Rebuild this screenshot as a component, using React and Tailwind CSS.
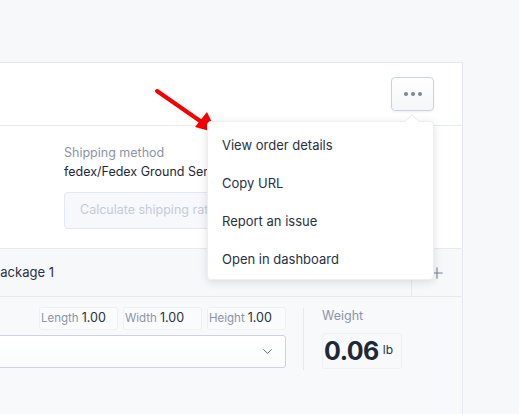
import React from "react";
import { ChevronDown, Plus } from "lucide-react";

const MENU = ["View order details", "Copy URL", "Report an issue", "Open in dashboard"];

function DimBox({ label, value }) {
  return (
    <div className="flex h-[23px] w-[79px] items-center gap-[3px] rounded-[3px] border border-[#eef0f4] bg-[#fafbfc] pl-[1px]">
      <span className="text-[11.5px] text-[#8b94a7]">{label}</span>
      <span className="text-[12.5px] text-[#273142]">{value}</span>
    </div>
  );
}

function MoreMenu() {
  return (
    <div className="relative">
      <button className="flex h-[34px] w-[43px] items-center justify-center gap-[3px] rounded-[4px] border border-[#cbd3e3] bg-gradient-to-b from-white to-[#f5f6f9] shadow-[0_1px_2px_rgba(30,40,70,0.08)]">
        <span className="h-[4px] w-[4px] rounded-full bg-[#7c8598]" />
        <span className="h-[4px] w-[4px] rounded-full bg-[#7c8598]" />
        <span className="h-[4px] w-[4px] rounded-full bg-[#7c8598]" />
      </button>
      <div className="absolute right-0 top-[44px] z-10 w-[227px] rounded-[4px] border border-[#eceef2] bg-white pt-[5px] shadow-[0_2px_8px_rgba(30,40,70,0.14)]">
        <div className="absolute right-[16px] top-[-6px] h-[10px] w-[10px] rotate-45 border-l border-t border-[#eceef2] bg-white" />
        {MENU.map((item) => (
          <div key={item} className="flex h-[38px] items-center pl-[14px] text-[13px] text-[#273142]">
            {item}
          </div>
        ))}
      </div>
    </div>
  );
}

export default function App() {
  return (
    <div className="relative h-[414px] w-[519px] overflow-hidden bg-[#f7f8fa] pt-[62px] font-['Inter',sans-serif]">
      <div className="ml-[-100px] w-[563px] border border-[#e6e9ef] bg-white">
        {/* header with actions */}
        <div className="flex h-[63px] justify-end border-b border-[#e6e9ef] pr-[28px] pt-[14px]">
          <MoreMenu />
        </div>

        {/* shipping method */}
        <div className="h-[123px] border-b border-[#e6e9ef] pl-[163px] pt-[18px]">
          <div className="text-[12.5px] leading-[18px] text-[#8b94a7]">Shipping method</div>
          <div className="mt-[1px] whitespace-nowrap text-[12.5px] leading-[18px] text-[#1f2837]">
            fedex/Fedex Ground Service
          </div>
          <div className="mt-[11px] flex h-[37px] w-[180px] items-center rounded-[4px] border border-[#e3e7ef] bg-[#f7f8fb] pl-[15px] text-[12.5px] text-[#c3cad9]">
            Calculate shipping rates
          </div>
        </div>

        {/* package tab row */}
        <div className="flex h-[48px] border-b border-[#e6e9ef] bg-[#f7f8fa]">
          <div className="flex flex-1 items-center pl-[91px] text-[13px] text-[#273142]">Package 1</div>
          <div className="flex w-[51px] items-center justify-center border-l border-[#e6e9ef] text-[#7a8497]">
            <Plus size={18} strokeWidth={1.5} />
          </div>
        </div>

        {/* dimensions and weight */}
        <div className="flex h-[140px] bg-[#f8f9fb] pt-[10px]">
          <div className="w-[385px]">
            <div className="flex justify-end gap-[5px]">
              <DimBox label="Length" value="1.00" />
              <DimBox label="Width" value="1.00" />
              <DimBox label="Height" value="1.00" />
            </div>
            <div className="mt-[5px] flex h-[33px] items-center justify-end rounded-[3px] border border-[#cbd3e3] bg-gradient-to-b from-white to-[#fafbfc] pr-[10px] text-[#5d687b]">
              <ChevronDown size={15} strokeWidth={1.6} />
            </div>
          </div>
          <div className="ml-[17px] mt-[1px] h-[62px] w-px bg-[#e6e9ef]" />
          <div className="ml-[18px]">
            <div className="text-[12.5px] leading-[18px] text-[#8b94a7]">Weight</div>
            <div className="mt-[8px] flex h-[36px] w-[80px] items-center gap-[4px] rounded-[3px] border border-[#eef0f4] pl-[1px]">
              <span className="text-[25px] font-bold leading-none tracking-[-0.5px] text-[#1f2837]">0.06</span>
              <span className="mb-[3px] text-[12px] leading-none text-[#273142]">lb</span>
            </div>
          </div>
        </div>
      </div>

      {/* pointer arrow */}
      <svg className="absolute left-0 top-0" width="519" height="414">
        <line x1="157" y1="91" x2="203" y2="123" stroke="#f50000" strokeWidth="4" strokeLinecap="round" />
        <polygon points="217,133 195,127 207,112" fill="#f50000" />
      </svg>
    </div>
  );
}
